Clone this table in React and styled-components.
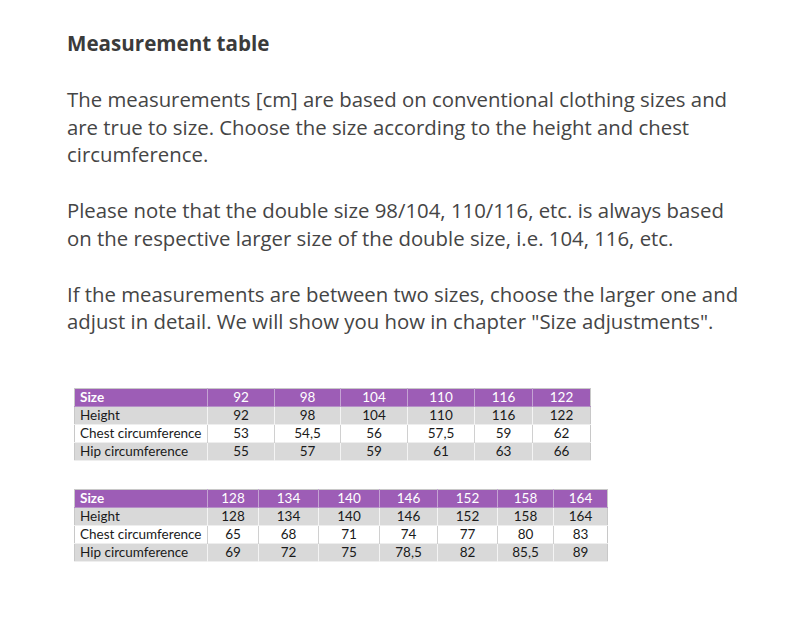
import React from "react";
import styled, { createGlobalStyle } from "styled-components";

const Global = createGlobalStyle`
  html, body { margin: 0; padding: 0; background: #fff; }
  body { font-family: "Open Sans", "Liberation Sans", sans-serif; }
`;

const Page = styled.div`
  width: 794px;
  height: 622px;
  box-sizing: border-box;
  padding: 29px 40px 0 67px;
  color: #444;
`;

const Heading = styled.h2`
  margin: 0 0 29px;
  font-size: 20.6px;
  line-height: 28px;
  font-weight: 700;
  color: #3b3b3b;
`;

const Para = styled.p`
  margin: 0 0 28px;
  max-width: 680px;
  font-size: 20.35px;
  line-height: 27.7px;
  font-weight: 400;
  color: #454545;
`;

const Tables = styled.div`
  display: flex;
  flex-direction: column;
  gap: 28px;
  margin-top: 52px;
  margin-left: 7px;
`;

const Table = styled.table`
  border-collapse: collapse;
  table-layout: fixed;
  font-family: "Lato", "Noto Sans", sans-serif;
  font-size: 13.5px;
  color: #1a1a1a;
  border: 1px solid #c8c8c8;
`;

const Col = styled.col`
  width: ${(p) => p.$w}px;
`;

const Row = styled.tr`
  height: 18px;
  background: ${(p) => (p.$head ? "#9d5db6" : p.$light ? "#ffffff" : "#d9d9d9")};
  color: ${(p) => (p.$head ? "#fff" : "#1a1a1a")};
  border-bottom: 1px solid ${(p) => (p.$head ? "#b58fc7" : "#eeeeee")};
`;

const Cell = styled.td`
  padding: 0 5px;
  line-height: 17px;
  text-align: ${(p) => (p.$label ? "left" : "center")};
  font-weight: ${(p) => (p.$bold ? 700 : 400)};
  border-right: 1px solid ${(p) => (p.$head ? "#c4a3d3" : p.$light ? "#d0d0d0" : "#f4f4f4")};
  white-space: nowrap;
  &:last-child { border-right: none; }
`;

const table1 = {
  widths: [133, 67, 66, 67, 67, 58, 58],
  sizes: ["92", "98", "104", "110", "116", "122"],
  rows: [
    ["Height", "92", "98", "104", "110", "116", "122"],
    ["Chest circumference", "53", "54,5", "56", "57,5", "59", "62"],
    ["Hip circumference", "55", "57", "59", "61", "63", "66"],
  ],
};

const table2 = {
  widths: [133, 51, 60, 61, 58, 60, 56, 54],
  sizes: ["128", "134", "140", "146", "152", "158", "164"],
  rows: [
    ["Height", "128", "134", "140", "146", "152", "158", "164"],
    ["Chest circumference", "65", "68", "71", "74", "77", "80", "83"],
    ["Hip circumference", "69", "72", "75", "78,5", "82", "85,5", "89"],
  ],
};

function SizeTable({ data }) {
  const total = data.widths.reduce((a, b) => a + b, 0);
  return (
    <Table style={{ width: total }}>
      <colgroup>
        {data.widths.map((w, i) => (
          <Col key={i} $w={w} />
        ))}
      </colgroup>
      <tbody>
        <Row $head>
          <Cell $head $label $bold>Size</Cell>
          {data.sizes.map((s) => (
            <Cell $head key={s}>{s}</Cell>
          ))}
        </Row>
        {data.rows.map((r, ri) => (
          <Row key={ri} $light={ri === 1}>
            {r.map((c, ci) => (
              <Cell key={ci} $label={ci === 0} $light={ri === 1}>
                {c}
              </Cell>
            ))}
          </Row>
        ))}
      </tbody>
    </Table>
  );
}

export default function App() {
  return (
    <>
      <Global />
      <Page>
        <Heading>Measurement table</Heading>
        <Para>
          The measurements [cm] are based on conventional clothing sizes and
          are true to size. Choose the size according to the height and chest
          circumference.
        </Para>
        <Para>
          Please note that the double size 98/104, 110/116, etc. is always based
          on the respective larger size of the double size, i.e. 104, 116, etc.
        </Para>
        <Para style={{ marginBottom: 0 }}>
          If the measurements are between two sizes, choose the larger one and
          adjust in detail. We will show you how in chapter "Size adjustments".
        </Para>
        <Tables>
          <SizeTable data={table1} />
          <SizeTable data={table2} />
        </Tables>
      </Page>
    </>
  );
}
